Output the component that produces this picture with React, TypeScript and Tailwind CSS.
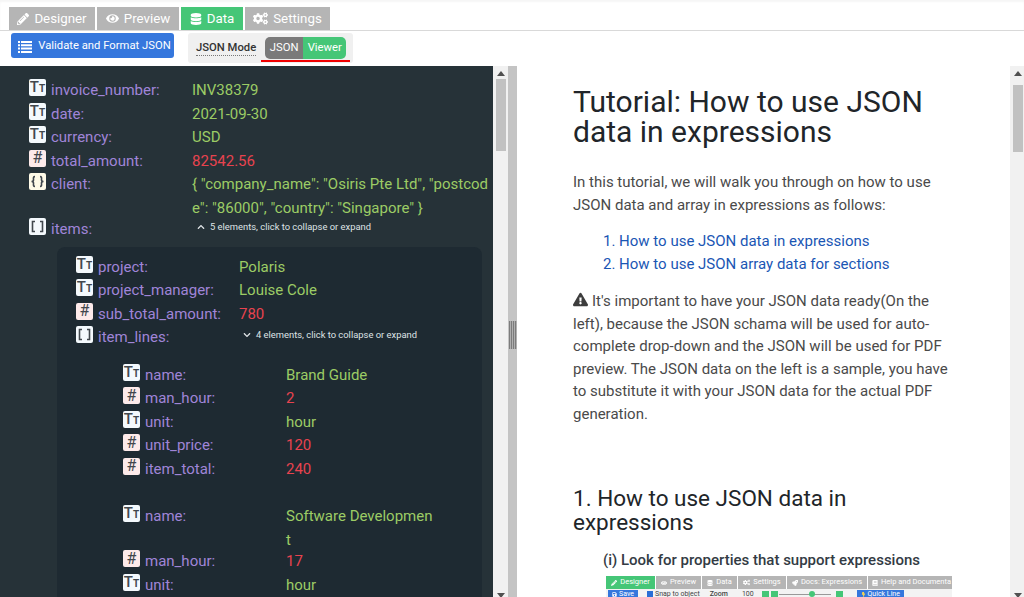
import React, { type FC, type ReactNode } from "react"
import {
  FaPencilAlt,
  FaEye,
  FaDatabase,
  FaCogs,
  FaExclamationTriangle,
  FaChevronUp,
  FaChevronDown,
  FaRocket,
  FaBook,
  FaSave,
  FaBolt,
} from "react-icons/fa"

type Kind = "text" | "num" | "obj" | "arr"

const TypeIcon: FC<{ kind: Kind }> = ({ kind }) => {
  const bg = kind === "num" ? "bg-[#fdeaea]" : kind === "obj" ? "bg-[#fffbe8]" : "bg-[#f4f9fd]"
  return (
    <span
      className={`flex h-[17px] w-[17px] shrink-0 items-center justify-center rounded-[2px] leading-none text-[#41474d] ${bg}`}
    >
      {kind === "text" && (
        <span className="font-medium text-[15px]">
          T<span className="text-[10px] font-bold">T</span>
        </span>
      )}
      {kind === "num" && <span className="text-[16px]">#</span>}
      {kind === "obj" && (
        <svg viewBox="0 0 17 17" className="h-[17px] w-[17px]" fill="none" stroke="currentColor" strokeWidth="1.6">
          <path d="M6 3.500C4 3.500 4.500 5.500 4.500 7c0 1-.8 1.500-2 1.500 1.200 0 2 .5 2 1.500 0 1.500-.5 3.500 1.500 3.500" />
          <path d="M11 3.500c2 0 1.500 2 1.500 3.500 0 1 .8 1.500 2 1.500-1.200 0-2 .5-2 1.500 0 1.500.5 3.500-1.500 3.500" />
        </svg>
      )}
      {kind === "arr" && (
        <svg viewBox="0 0 17 17" className="h-[17px] w-[17px]" fill="none" stroke="currentColor" strokeWidth="1.6">
          <path d="M6 3.500H3.500v10H6" />
          <path d="M11 3.500h2.500v10H11" />
        </svg>
      )}
    </span>
  )
}

interface RowProps {
  kind: Kind
  name: string
  value?: ReactNode
}

const Row: FC<RowProps> = ({ kind, name, value }) => (
  <div className="flex items-start">
    <TypeIcon kind={kind} />
    <span className="ml-[5px] w-[141px] shrink-0 text-[#a085d8]">{name}:</span>
    <span className={`min-w-0 flex-1 break-all ${kind === "num" ? "text-[#e8434f]" : "text-[#9ccc65]"}`}>
      {value}
    </span>
  </div>
)

const Collapse: FC<{ open?: boolean; children: ReactNode }> = ({ open, children }) => (
  <span className="flex h-[18px] items-center text-[9.4px] leading-none text-[#dfe3e6]">
    {open ? (
      <FaChevronUp className="mr-[5px] ml-[5px] h-[8px] w-[8px]" />
    ) : (
      <FaChevronDown className="mr-[5px] ml-[4px] h-[8px] w-[8px]" />
    )}
    {children}
  </span>
)

const Tab: FC<{ active?: boolean; icon: ReactNode; label: string; className: string }> = ({
  active,
  icon,
  label,
  className,
}) => (
  <div
    className={`flex h-[23px] items-center justify-center gap-[5px] text-[13.3px] text-white ${
      active ? "bg-[#45c677]" : "bg-[#b5b5b5]"
    } ${className}`}
  >
    {icon}
    {label}
  </div>
)

const MiniTab: FC<{ active?: boolean; icon: ReactNode; label: string; className: string }> = ({
  active,
  icon,
  label,
  className,
}) => (
  <div
    className={`flex h-[13px] shrink-0 items-center justify-center gap-[3px] overflow-hidden whitespace-nowrap text-[7.5px] text-white ${
      active ? "bg-[#45c677]" : "bg-[#b5b5b5]"
    } ${className}`}
  >
    {icon}
    {label}
  </div>
)

const Scrollbar: FC<{ thumbClass: string }> = ({ thumbClass }) => (
  <div className="relative flex h-full w-[15px] shrink-0 flex-col items-center bg-[#f1f1f1]">
    <div className="mt-[5px] h-0 w-0 border-x-[4px] border-b-[5px] border-x-transparent border-b-[#505050]" />
    <div className={`w-[10px] bg-[#c1c1c1] ${thumbClass}`} />
    <div className="absolute bottom-[-1px] h-0 w-0 border-x-[4px] border-t-[5px] border-x-transparent border-t-[#505050]" />
  </div>
)

const App: FC = () => {
  return (
    <div className="flex h-[597px] w-[1024px] flex-col overflow-hidden bg-white font-['Roboto',sans-serif]">
      {/* tabs */}
      <div className="flex h-[31px] shrink-0 items-end gap-[2px] border-b border-[#d9d9d9] pl-[9px] shadow-[inset_0_2px_2px_rgba(0,0,0,0.04)]">
        <Tab icon={<FaPencilAlt className="h-[12px] w-[12px]" />} label="Designer" className="w-[86px]" />
        <Tab icon={<FaEye className="h-[13px] w-[13px]" />} label="Preview" className="w-[82px]" />
        <Tab active icon={<FaDatabase className="h-[12px] w-[12px]" />} label="Data" className="w-[62px]" />
        <Tab icon={<FaCogs className="h-[15px] w-[15px]" />} label="Settings" className="w-[85px]" />
      </div>

      {/* toolbar */}
      <div className="flex h-[35px] shrink-0 items-start pt-[2px] pl-[11px]">
        <div className="flex h-[25px] w-[163px] items-center justify-center gap-[6px] rounded-[3px] bg-[#3577dd] pt-[2px] pl-[4px] text-[11.25px] text-white">
          <svg viewBox="0 0 14 12" className="h-[12px] w-[14px]" fill="currentColor">
            <path d="M0 0h2v2H0zM3 0h11v2H3zM0 3.300h2v2H0zM3 3.300h11v2H3zM0 6.600h2v2H0zM3 6.600h11v2H3zM0 10h2v2H0zM3 10h11v2H3z" />
          </svg>
          Validate and Format JSON
        </div>
        <div className="ml-[14px] flex h-[30px] w-[165px] items-center rounded-[3px] bg-[#f0f0f0] pl-[8px]">
          <span className="mt-[-1px] border-b border-dotted border-[#777] text-[11.25px] font-medium leading-[15px] text-[#333]">
            JSON Mode
          </span>
          <div className="relative ml-[9px] flex h-[22px] w-[81px] text-[11.25px] text-white">
            <div className="flex w-[38px] items-center justify-center rounded-l-[5px] bg-[#7a7a7a]">JSON</div>
            <div className="flex w-[43px] items-center justify-center rounded-r-[5px] bg-[#45c677]">Viewer</div>
            <div className="absolute top-[23px] left-[-4px] h-[2px] w-[89px] bg-[#f00000]" />
          </div>
        </div>
      </div>

      <div className="flex min-h-0 flex-1">
        {/* left: json viewer */}
        <div className="h-full w-[493px] shrink-0 overflow-hidden bg-[#263238] pt-[13px] pl-[29px] text-[15px] leading-[23.5px]">
          <div className="w-[460px]">
            <Row kind="text" name="invoice_number" value="INV38379" />
            <Row kind="text" name="date" value="2021-09-30" />
            <Row kind="text" name="currency" value="USD" />
            <Row kind="num" name="total_amount" value="82542.56" />
            <Row
              kind="obj"
              name="client"
              value={'{ "company_name": "Osiris Pte Ltd", "postcode": "86000", "country": "Singapore" }'}
            />
            <div className="mt-[-2px]">
              <Row kind="arr" name="items" value={<Collapse open>5 elements, click to collapse or expand</Collapse>} />
            </div>
          </div>

          <div className="mt-[5px] ml-[28px] h-[400px] w-[425px] rounded-[8px] bg-[#1e2a32] pt-[9px] pl-[19px]">
            <div className="w-[400px]">
              <Row kind="text" name="project" value="Polaris" />
              <Row kind="text" name="project_manager" value="Louise Cole" />
              <Row kind="num" name="sub_total_amount" value="780" />
              <Row kind="arr" name="item_lines" value={<Collapse>4 elements, click to collapse or expand</Collapse>} />
            </div>

            <div className="mt-[14px] ml-[47px] w-[310px]">
              <Row kind="text" name="name" value="Brand Guide" />
              <Row kind="num" name="man_hour" value="2" />
              <Row kind="text" name="unit" value="hour" />
              <Row kind="num" name="unit_price" value="120" />
              <Row kind="num" name="item_total" value="240" />
              <div className="mt-[24px]">
                <Row kind="text" name="name" value="Software Development" />
              </div>
              <div className="mt-[-2px]">
                <Row kind="num" name="man_hour" value="17" />
              </div>
              <Row kind="text" name="unit" value="hour" />
            </div>
          </div>
        </div>

        <Scrollbar thumbClass="mt-[3px] h-[72px]" />

        {/* splitter */}
        <div className="flex h-full w-[9px] shrink-0 items-center justify-center bg-[#c4c4c4] pt-[7px]">
          <div className="h-[28px] w-[8px] bg-[repeating-linear-gradient(90deg,#7c7c7c_0,#7c7c7c_1px,#b0b0b0_1px,#b0b0b0_2px)]" />
        </div>

        {/* right: tutorial */}
        <div className="h-full w-[493px] shrink-0 overflow-hidden bg-white pt-[21px] pr-[57px] pl-[56px] text-[15px] leading-[22.5px] text-[#4a4a4a]">
          <h1 className="text-[30px] leading-[30px] font-normal text-[#212529]">
            Tutorial: How to use JSON data in expressions
          </h1>
          <p className="mt-[24px]">
            In this tutorial, we will walk you through on how to use JSON data and array in expressions as follows:
          </p>
          <ol className="mt-[14px] pl-[30px] text-[#1a56b4]">
            <li>1. How to use JSON data in expressions</li>
            <li>2. How to use JSON array data for sections</li>
          </ol>
          <p className="mt-[15px]">
            <FaExclamationTriangle className="mr-[4px] inline-block h-[15px] w-[15px] align-[-1px] text-[#3d3d3d]" />
            It's important to have your JSON data ready(On the left), because the JSON schama will be used for
            auto-complete drop-down and the JSON will be used for PDF preview. The JSON data on the left is a sample,
            you have to substitute it with your JSON data for the actual PDF generation.
          </p>
          <h2 className="mt-[62px] text-[22.5px] leading-[23.5px] font-normal text-[#212529]">
            1. How to use JSON data in expressions
          </h2>
          <div className="w-[380px] pl-[30px]">
            <h3 className="mt-[16px] text-[15px] leading-[20px] font-medium text-[#333b44]">
              (i) Look for properties that support expressions
            </h3>
            <div className="mt-[6px] ml-[3px] w-[346px]">
              <div className="flex gap-[1px] overflow-hidden">
                <MiniTab active icon={<FaPencilAlt className="h-[6px] w-[6px]" />} label="Designer" className="w-[49px]" />
                <MiniTab icon={<FaEye className="h-[6px] w-[6px]" />} label="Preview" className="w-[45px]" />
                <MiniTab icon={<FaDatabase className="h-[6px] w-[6px]" />} label="Data" className="w-[35px]" />
                <MiniTab icon={<FaCogs className="h-[7px] w-[7px]" />} label="Settings" className="w-[48px]" />
                <MiniTab icon={<FaRocket className="h-[6px] w-[6px]" />} label="Docs: Expressions" className="w-[80px]" />
                <div className="flex h-[13px] flex-1 items-center gap-[3px] overflow-hidden bg-[#b5b5b5] pl-[4px] text-[7.5px] whitespace-nowrap text-white">
                  <FaBook className="h-[6px] w-[6px] shrink-0" />
                  Help and Documenta
                </div>
              </div>
              <div className="flex h-[10px] items-start bg-[#f3f3f3] pt-[1px] pl-[2px] text-[7px] leading-[9px] text-[#444]">
                <div className="flex h-[9px] w-[30px] items-center justify-center gap-[2px] bg-[#3577dd] text-white">
                  <FaSave className="h-[5px] w-[5px]" />
                  Save
                </div>
                <span className="mt-[1px] ml-[9px] h-[6px] w-[6px] bg-[#2a6fd6]" />
                <span className="ml-[2px]">Snap to object</span>
                <span className="ml-[10px] font-medium">Zoom</span>
                <span className="ml-[14px]">100</span>
                <span className="mt-[1px] ml-[8px] h-[6px] w-[7px] bg-[#45c677]" />
                <span className="mt-[1px] ml-[2px] h-[6px] w-[7px] bg-[#45c677]" />
                <span className="relative mt-[4px] ml-[1px] h-[1px] w-[52px] bg-[#999]">
                  <span className="absolute top-[-3px] left-[30px] h-[6px] w-[6px] rounded-full bg-[#45c677]" />
                </span>
                <span className="mt-[1px] ml-[5px] h-[6px] w-[7px] bg-[#45c677]" />
                <div className="ml-[14px] flex h-[9px] w-[47px] items-center justify-center gap-[2px] bg-[#3577dd] text-white">
                  <FaBolt className="h-[5px] w-[5px] text-[#ffd84a]" />
                  Quick Line
                </div>
              </div>
            </div>
          </div>
        </div>

        <Scrollbar thumbClass="mt-[9px] h-[67px]" />
      </div>
    </div>
  )
}

export default App
